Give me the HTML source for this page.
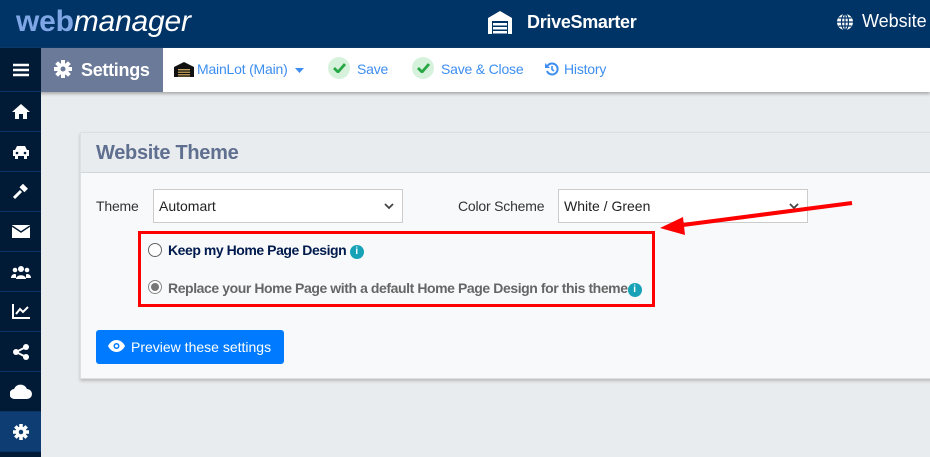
<!DOCTYPE html>
<html><head><meta charset="utf-8"><style>
*{box-sizing:border-box;margin:0;padding:0}
body{width:930px;height:457px;overflow:hidden;background:#e9ecef;font-family:"Liberation Sans",sans-serif;position:relative}
.top{position:absolute;left:0;top:0;width:930px;height:48px;background:#003366}
.logo{position:absolute;left:16px;top:5px;font-size:30px;color:#fff;font-style:italic;letter-spacing:-0.2px}
.logo b{color:#7fa7e6;font-style:normal}
.brand{position:absolute;left:527px;top:12px;color:#fff;font-weight:bold;font-size:18px;letter-spacing:-0.3px}
.web{position:absolute;left:862px;top:11px;color:#fff;font-size:18px}
.tool{position:absolute;left:0;top:48px;width:930px;height:44px;background:#fff;box-shadow:0 2px 3px #aaa}
.side{position:absolute;left:0;top:48px;width:41px;height:409px;background:#011a35}
.side div{height:40px;border-bottom:1px solid #0b3466;display:flex;align-items:center;justify-content:center}
.sett{position:absolute;left:41px;top:48px;width:122px;height:44px;background:#6b7a99;color:#fff;font-weight:bold;font-size:18px;padding:12px 0 0 40px;letter-spacing:-0.3px}
.tl{position:absolute;top:61px;color:#3d8ef0;font-size:14px;letter-spacing:-0.2px}
.chk{position:absolute;top:57px;width:22px;height:22px;border-radius:50%;background:#d6f2dc}
.panel{position:absolute;left:80px;top:132px;width:860px;height:247px;background:#f8f9fa;border:1px solid #dcdfe3;box-shadow:0 2px 3px #bbb}
.ph{height:40px;background:#e9ecef;border-bottom:1px solid #d2d6db;color:#5f6f8f;font-weight:bold;font-size:20px;padding:9px 0 0 15px;letter-spacing:-0.3px}
.lbl{position:absolute;font-size:14px;color:#333;letter-spacing:-0.2px}
.sel{position:absolute;height:34px;background:#fff;border:1px solid #ccc;font-size:14px;color:#222;padding:8px 0 0 5px}
.sel svg{position:absolute;right:8px;top:13px}
.radio{position:absolute;width:14px;height:14px;border-radius:50%;border:1px solid #666;background:#fff}
.info{display:inline-block;width:14px;height:14px;border-radius:50%;background:#17a2b8;color:#fff;font-size:10px;text-align:center;line-height:14px;font-weight:bold;vertical-align:1px;letter-spacing:0}
.red{position:absolute;left:138px;top:231px;width:517px;height:76px;border:3px solid #f00}
.btn{position:absolute;left:96px;top:330px;width:188px;height:34px;background:#007bff;border-radius:3px;color:#fff;font-size:14px;padding:9px 0 0 35px}
</style></head><body>
<div class="top">
<div class="logo"><b>web</b>manager</div>
<svg style="position:absolute;left:486px;top:10px" width="28" height="24" viewBox="0 0 28 24"><path d="M2 8 L14 1 L26 8 V24 H22 V11 H6 V24 H2Z" fill="#fff"/><rect x="7" y="13" width="14" height="2.5" fill="#fff"/><rect x="7" y="17" width="14" height="2.5" fill="#fff"/><rect x="7" y="21" width="14" height="2.5" fill="#fff"/></svg>
<div class="brand">DriveSmarter</div>
<svg style="position:absolute;left:836px;top:13px" width="18" height="18" viewBox="0 0 18 18"><circle cx="9" cy="9" r="8" fill="#fff"/><path d="M1 9H17M9 1V17M2.5 5H15.5M2.5 13H15.5" stroke="#003366" stroke-width="1.2"/><ellipse cx="9" cy="9" rx="3.5" ry="8" fill="none" stroke="#003366" stroke-width="1.2"/></svg>
<div class="web">Website</div>
</div>
<div class="tool"></div>
<div class="sett">Settings</div>
<svg style="position:absolute;left:54px;top:60px" width="18" height="18" viewBox="0 0 18 18"><g fill="#fff"><circle cx="9" cy="9" r="6"/><rect x="7" y="0" width="4" height="18"/><rect x="0" y="7" width="18" height="4"/><rect x="7" y="0" width="4" height="18" transform="rotate(45 9 9)"/><rect x="7" y="0" width="4" height="18" transform="rotate(-45 9 9)"/></g><circle cx="9" cy="9" r="2.5" fill="#6b7a99"/></svg>
<svg style="position:absolute;left:174px;top:62px" width="20" height="15" viewBox="0 0 20 15"><path d="M0 5 L10 0 L20 5 V15 H0Z" fill="#111"/><rect x="4" y="7" width="12" height="8" fill="#c9a45a"/><path d="M4 9H16M4 11.5H16M4 14H16" stroke="#111" stroke-width="1.2"/></svg>
<div class="tl" style="left:197px">MainLot (Main)</div>
<svg style="position:absolute;left:295px;top:68px" width="9" height="5"><path d="M0 0H9L4.5 5Z" fill="#3d8ef0"/></svg>
<div class="chk" style="left:328px"></div>
<svg style="position:absolute;left:333px;top:63px" width="13" height="10"><path d="M1 5L5 9L12 1" stroke="#28a745" stroke-width="2.8" fill="none"/></svg>
<div class="tl" style="left:357px">Save</div>
<div class="chk" style="left:412px"></div>
<svg style="position:absolute;left:417px;top:63px" width="13" height="10"><path d="M1 5L5 9L12 1" stroke="#28a745" stroke-width="2.8" fill="none"/></svg>
<div class="tl" style="left:441px">Save &amp; Close</div>
<svg style="position:absolute;left:545px;top:62px" width="14" height="14" viewBox="0 0 14 14"><path d="M2.5 4A5.5 5.5 0 1 1 2 9" stroke="#3d8ef0" stroke-width="2" fill="none"/><path d="M0 1V6H5Z" fill="#3d8ef0"/><path d="M7 4V7.5L9 9" stroke="#3d8ef0" stroke-width="1.6" fill="none"/></svg>
<div class="tl" style="left:564px">History</div>
<div class="side">
<div style="height:44px;background:#011a35"><svg width="16" height="14"><path d="M0 2H16M0 7H16M0 12H16" stroke="#fff" stroke-width="2.5"/></svg></div>
<div><svg width="18" height="15" viewBox="0 0 18 15"><path d="M9 0L0 8H3V15H7V10H11V15H15V8H18Z" fill="#fff"/></svg></div>
<div><svg width="18" height="14" viewBox="0 0 18 14"><path d="M3 5L5 1H13L15 5H17V11H15V14H12V11H6V14H3V11H1V5Z" fill="#fff"/><circle cx="5" cy="8" r="1.3" fill="#011a35"/><circle cx="13" cy="8" r="1.3" fill="#011a35"/></svg></div>
<div><svg width="16" height="16" viewBox="0 0 16 16"><rect x="7" y="1" width="7" height="5" fill="#fff" transform="rotate(45 10 4)"/><path d="M8 7L1 14" stroke="#fff" stroke-width="3"/></svg></div>
<div><svg width="18" height="13" viewBox="0 0 18 13"><rect width="18" height="13" fill="#fff"/><path d="M0 1L9 7L18 1" stroke="#011a35" stroke-width="1.5" fill="none"/></svg></div>
<div><svg width="20" height="14" viewBox="0 0 20 14"><g fill="#fff"><circle cx="10" cy="4" r="3"/><circle cx="4" cy="5" r="2.3"/><circle cx="16" cy="5" r="2.3"/><path d="M5 14C5 9 15 9 15 14Z"/><path d="M0 13C0 9 5 8 5 10V13Z"/><path d="M20 13C20 9 15 8 15 10V13Z"/></g></svg></div>
<div><svg width="18" height="15" viewBox="0 0 18 15"><path d="M1 0V14H18" stroke="#fff" stroke-width="2" fill="none"/><path d="M4 10L8 5L11 8L16 3" stroke="#fff" stroke-width="2" fill="none"/></svg></div>
<div><svg width="16" height="16" viewBox="0 0 16 16"><g fill="#fff"><circle cx="13" cy="3" r="3"/><circle cx="3" cy="8" r="3"/><circle cx="13" cy="13" r="3"/></g><path d="M3 8L13 3M3 8L13 13" stroke="#fff" stroke-width="2"/></svg></div>
<div><svg width="22" height="15" viewBox="0 0 22 15"><path d="M5 15A5 5 0 0 1 4 5A7 7 0 0 1 17 5A5 5 0 0 1 17 15Z" fill="#fff"/></svg></div>
<div style="background:#0d3d73"><svg width="16" height="16" viewBox="0 0 18 18"><g fill="#fff"><circle cx="9" cy="9" r="6"/><rect x="7" y="0" width="4" height="18"/><rect x="0" y="7" width="18" height="4"/><rect x="7" y="0" width="4" height="18" transform="rotate(45 9 9)"/><rect x="7" y="0" width="4" height="18" transform="rotate(-45 9 9)"/></g><circle cx="9" cy="9" r="2.5" fill="#0d3d73"/></svg></div>
</div>
<div class="panel"><div class="ph">Website Theme</div></div>
<div class="lbl" style="left:96px;top:198px">Theme</div>
<div class="sel" style="left:153px;top:189px;width:250px">Automart<svg width="10" height="7"><path d="M1 1L5 5L9 1" stroke="#444" stroke-width="1.8" fill="none"/></svg></div>
<div class="lbl" style="left:458px;top:198px">Color Scheme</div>
<div class="sel" style="left:558px;top:189px;width:250px">White / Green<svg width="10" height="7"><path d="M1 1L5 5L9 1" stroke="#444" stroke-width="1.8" fill="none"/></svg></div>
<div class="radio" style="left:148px;top:243px"></div>
<div class="lbl" style="left:168px;top:242px;font-weight:bold;color:#001a4d;letter-spacing:-0.45px">Keep my Home Page Design <span class="info">i</span></div>
<div class="radio" style="left:148px;top:280px;border-color:#888"><div style="width:8px;height:8px;border-radius:50%;background:#777;margin:2px"></div></div>
<div class="lbl" style="left:168px;top:280px;font-weight:bold;color:#666;letter-spacing:-0.42px">Replace your Home Page with a default Home Page Design for this theme<span class="info">i</span></div>
<div class="red"></div>
<svg style="position:absolute;left:650px;top:195px" width="210" height="45"><path d="M202 8L25 31" stroke="#f00" stroke-width="4"/><path d="M10 33L33 22L35 40Z" fill="#f00"/></svg>
<div class="btn">Preview these settings</div>
<svg style="position:absolute;left:108px;top:340px" width="17" height="12" viewBox="0 0 17 12"><path d="M0 6C4 -2 13 -2 17 6C13 14 4 14 0 6Z" fill="#fff"/><circle cx="8.5" cy="6" r="3" fill="#007bff"/><circle cx="8.5" cy="6" r="1.5" fill="#fff"/></svg>
</body></html>
